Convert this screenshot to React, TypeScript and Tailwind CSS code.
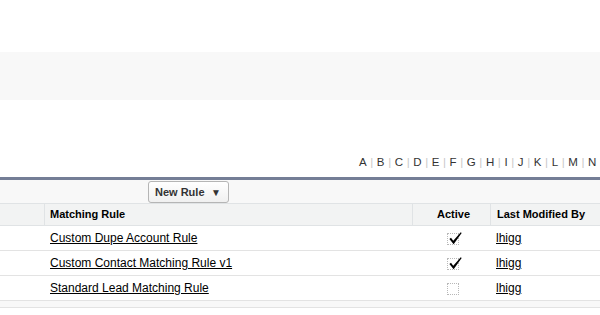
import React from "react";

const letters = ["A", "B", "C", "D", "E", "F", "G", "H", "I", "J", "K", "L", "M", "N"];

const rules = [
  { name: "Custom Dupe Account Rule", active: true, by: "lhigg" },
  { name: "Custom Contact Matching Rule v1", active: true, by: "lhigg" },
  { name: "Standard Lead Matching Rule", active: false, by: "lhigg" },
];

const CheckBox = ({ checked }: { checked: boolean }) => (
  <span className="relative inline-block w-[12px] h-[12px] border border-dotted border-[#b8b8b8] align-middle">
    {checked && (
      <svg viewBox="0 0 16 16" className="absolute left-[0px] top-[-3px] w-[15px] h-[15px]">
        <path d="M1.5 8.5 L3.2 7.2 L5.6 10.4 L13.6 1.2 L14.6 2 L6 14 Z" fill="#000" />
      </svg>
    )}
  </span>
);

export default function App() {
  return (
    <div className="w-[600px] h-[315px] overflow-hidden bg-white font-['Liberation_Sans',Arial,sans-serif] text-[#000]">
      {/* page header band */}
      <div className="h-[52px]" />
      <div className="h-[48px] bg-[#f8f8f8]" />
      <div className="h-[54px]" />

      {/* rolodex */}
      <div className="h-[16px] flex items-center pl-[359px] whitespace-nowrap text-[11.5px] leading-[16px] text-[#333]">
        {letters.map((l, i) => (
          <span key={l} className="flex items-center">
            {i > 0 && <span className="px-[3.6px] text-[#c8c8c8]">|</span>}
            <span>{l}</span>
          </span>
        ))}
      </div>
      <div className="h-[7px]" />

      {/* list */}
      <div className="border-t-[3px] border-[#747e96]">
        <div className="h-[23px] bg-[#f8f8f8] flex items-start pl-[148px] pt-[1px]">
          <button className="h-[22px] w-[81px] flex items-center justify-between pl-[6px] pr-[7px] rounded-[3px] border border-[#b5b5b5] bg-gradient-to-b from-white to-[#f0f0f0] text-[11px] font-bold text-[#333]">
            <span>New Rule</span>
            <span className="text-[10px] text-[#333]">▼</span>
          </button>
        </div>

        <div className="flex h-[23px] bg-[#f2f3f3] border-y border-[#e0e3e5] text-[11px] font-bold text-[#000] whitespace-nowrap">
          <div className="w-[45px] border-r border-[#e0e3e5]" />
          <div className="w-[368px] border-r border-[#e0e3e5] pl-[5px] leading-[21px]">Matching Rule</div>
          <div className="w-[78px] border-r border-[#e0e3e5] text-center pl-[4px] leading-[21px]">Active</div>
          <div className="flex-1 pl-[6px] leading-[21px]">Last Modified By</div>
        </div>

        {rules.map((r) => (
          <div key={r.name} className="flex h-[25px] items-center border-b border-[#e3e3e3] text-[12px] whitespace-nowrap">
            <div className="w-[45px]" />
            <div className="w-[368px] pl-[5px]">
              <a href="#" className="underline text-[#000]">{r.name}</a>
            </div>
            <div className="w-[78px] flex justify-center pl-[2px] pt-[2px]">
              <CheckBox checked={r.active} />
            </div>
            <div className="flex-1 pl-[5px]">
              <a href="#" className="underline text-[#000]">{r.by}</a>
            </div>
          </div>
        ))}

        <div className="h-[7px] bg-[#f8f8f8] border-b border-[#e3e3e3]" />
      </div>
    </div>
  );
}
